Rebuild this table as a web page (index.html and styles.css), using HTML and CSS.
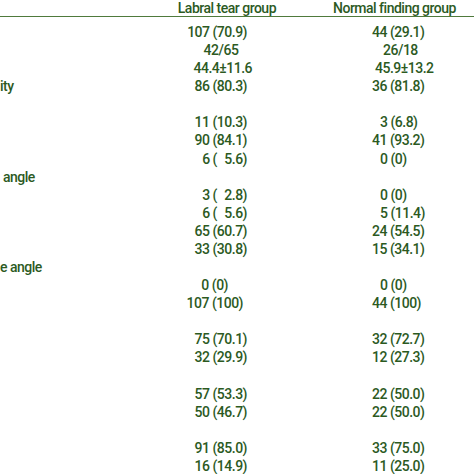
FILE: index.html
```html
<!DOCTYPE html>
<html>
<head>
<meta charset="utf-8">
<link rel="stylesheet" href="styles.css">
</head>
<body>
<div class="table">
  <div class="row head">
    <div class="lab"></div>
    <div class="c1 hc">Labral tear group</div>
    <div class="gap"></div>
    <div class="c2 hc">Normal finding group</div>
  </div>
  <div class="body">
    <div class="row"><div class="lab"></div><div class="c1">107 (70.9)</div><div class="gap"></div><div class="c2">44 (29.1)</div></div>
    <div class="row"><div class="lab"></div><div class="c1 ctr">42/65</div><div class="gap"></div><div class="c2 l50">26/18</div></div>
    <div class="row"><div class="lab"></div><div class="c1 r24">44.4±11.6</div><div class="gap"></div><div class="c2 l42">45.9±13.2</div></div>
    <div class="row"><div class="lab">ity</div><div class="c1">86 (80.3)</div><div class="gap"></div><div class="c2">36 (81.8)</div></div>
    <div class="row"><div class="lab"></div><div class="c1"></div><div class="gap"></div><div class="c2"></div></div>
    <div class="row"><div class="lab"></div><div class="c1">11 (10.3)</div><div class="gap"></div><div class="c2 l47">3 (6.8)</div></div>
    <div class="row"><div class="lab"></div><div class="c1">90 (84.1)</div><div class="gap"></div><div class="c2">41 (93.2)</div></div>
    <div class="row"><div class="lab"></div><div class="c1">6 (&#8199;5.6)</div><div class="gap"></div><div class="c2 l47">0 (0)</div></div>
    <div class="row"><div class="lab ind">angle</div><div class="c1"></div><div class="gap"></div><div class="c2"></div></div>
    <div class="row"><div class="lab"></div><div class="c1">3 (&#8199;2.8)</div><div class="gap"></div><div class="c2 l47">0 (0)</div></div>
    <div class="row"><div class="lab"></div><div class="c1">6 (&#8199;5.6)</div><div class="gap"></div><div class="c2 l47">5 (11.4)</div></div>
    <div class="row"><div class="lab"></div><div class="c1">65 (60.7)</div><div class="gap"></div><div class="c2">24 (54.5)</div></div>
    <div class="row"><div class="lab"></div><div class="c1">33 (30.8)</div><div class="gap"></div><div class="c2">15 (34.1)</div></div>
    <div class="row"><div class="lab">e angle</div><div class="c1"></div><div class="gap"></div><div class="c2"></div></div>
    <div class="row"><div class="lab"></div><div class="c1 r48">0 (0)</div><div class="gap"></div><div class="c2 l47">0 (0)</div></div>
    <div class="row"><div class="lab"></div><div class="c1 r33">107 (100)</div><div class="gap"></div><div class="c2">44 (100)</div></div>
    <div class="row"><div class="lab"></div><div class="c1"></div><div class="gap"></div><div class="c2"></div></div>
    <div class="row"><div class="lab"></div><div class="c1">75 (70.1)</div><div class="gap"></div><div class="c2">32 (72.7)</div></div>
    <div class="row"><div class="lab"></div><div class="c1">32 (29.9)</div><div class="gap"></div><div class="c2">12 (27.3)</div></div>
    <div class="row"><div class="lab"></div><div class="c1"></div><div class="gap"></div><div class="c2"></div></div>
    <div class="row"><div class="lab"></div><div class="c1">57 (53.3)</div><div class="gap"></div><div class="c2">22 (50.0)</div></div>
    <div class="row"><div class="lab"></div><div class="c1">50 (46.7)</div><div class="gap"></div><div class="c2">22 (50.0)</div></div>
    <div class="row"><div class="lab"></div><div class="c1"></div><div class="gap"></div><div class="c2"></div></div>
    <div class="row"><div class="lab"></div><div class="c1">91 (85.0)</div><div class="gap"></div><div class="c2">33 (75.0)</div></div>
    <div class="row"><div class="lab"></div><div class="c1">16 (14.9)</div><div class="gap"></div><div class="c2">11 (25.0)</div></div>
  </div>
</div>
</body>
</html>
```
FILE: styles.css
```css
html, body {
  margin: 0;
  padding: 0;
  background: #ffffff;
}
body {
  width: 474px;
  height: 474px;
  overflow: hidden;
  font-family: Roboto, "Liberation Sans", sans-serif;
  font-size: 14px;
  font-weight: 500;
  letter-spacing: -0.5px;
  color: #2c5a1f;
}
.table {
  display: flex;
  flex-direction: column;
}
.row {
  display: grid;
  grid-template-columns: 166px 110px 57px 141px;
  line-height: 18.08px;
  height: 18.08px;
  white-space: pre;
}
.head {
  line-height: 16px;
  height: 16px;
  border-bottom: 1px solid #4f7a3c;
}
.body {
  margin-top: 6px;
}
.hc {
  text-align: left;
  padding: 0;
}
.lab {
  text-align: left;
}
.ind {
  padding-left: 3px;
}
.c1 {
  text-align: right;
  padding-right: 29px;
}
.c1.hc {
  padding-right: 0;
}
.c2 {
  text-align: left;
  padding-left: 39px;
}
.c2.hc {
  padding-left: 0;
}
.ctr {
  text-align: center;
  padding-right: 0;
}
.r24 { padding-right: 24px; }
.r33 { padding-right: 33px; }
.r48 { padding-right: 48px; }
.l42 { padding-left: 42px; }
.l47 { padding-left: 47px; }
.l50 { padding-left: 50px; }
```
